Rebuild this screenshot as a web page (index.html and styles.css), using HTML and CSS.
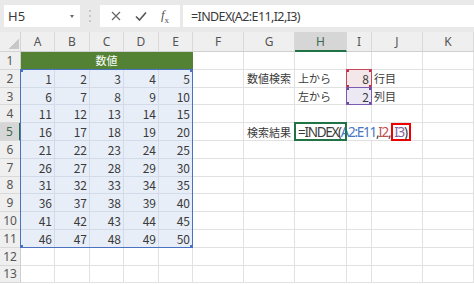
FILE: index.html
```html
<!DOCTYPE html>
<html lang="ja">
<head>
    <meta charset="UTF-8">
    <title>INDEX関数</title>
    <link rel="stylesheet" href="styles.css">
</head>
<body>
    <div class="toolbar">
        <div class="namebox"><span>H5</span><span class="caret"></span></div>
        <div class="grip">
            <svg width="4" height="14" viewBox="0 0 4 14"><circle cx="2" cy="2" r="1" fill="#bbb"/><circle cx="2" cy="7" r="1" fill="#bbb"/><circle cx="2" cy="12" r="1" fill="#bbb"/></svg>
        </div>
        <div class="fxbox">
            <svg class="tb-icon" width="10" height="10" viewBox="0 0 10 10"><path d="M1 1L9 9M9 1L1 9" stroke="#666" stroke-width="1.2" fill="none"/></svg>
            <svg class="tb-icon" width="12" height="10" viewBox="0 0 12 10"><path d="M1 5.5L4.5 9L11 1.5" stroke="#555" stroke-width="1.6" fill="none"/></svg>
            <span class="fx"><i>f</i><sub>x</sub></span>
        </div>
        <div class="formula-input">=INDEX(A2:E11,I2,I3)</div>
    </div>

    <div class="sheet">
        <div class="grid cells">
            <div class="corner"></div>
            <div class="ch">A</div><div class="ch">B</div><div class="ch">C</div><div class="ch">D</div><div class="ch">E</div>
            <div class="ch">F</div><div class="ch">G</div><div class="ch active-col">H</div><div class="ch">I</div><div class="ch">J</div><div class="ch">K</div>

            <div class="rh">1</div>
            <div class="c title">数値</div>
            <div class="c"></div><div class="c"></div><div class="c"></div><div class="c"></div><div class="c"></div><div class="c"></div>

            <div class="rh">2</div>
            <div class="c d">1</div><div class="c d">2</div><div class="c d">3</div><div class="c d">4</div><div class="c d">5</div>
            <div class="c"></div><div class="c jp">数値検索</div><div class="c jp">上から</div><div class="c n ref-row">8</div><div class="c jp tight">行目</div><div class="c"></div>

            <div class="rh">3</div>
            <div class="c d">6</div><div class="c d">7</div><div class="c d">8</div><div class="c d">9</div><div class="c d">10</div>
            <div class="c"></div><div class="c"></div><div class="c jp">左から</div><div class="c n ref-col">2</div><div class="c jp tight">列目</div><div class="c"></div>

            <div class="rh">4</div>
            <div class="c d">11</div><div class="c d">12</div><div class="c d">13</div><div class="c d">14</div><div class="c d">15</div>
            <div class="c"></div><div class="c"></div><div class="c"></div><div class="c"></div><div class="c"></div><div class="c"></div>

            <div class="rh active-row">5</div>
            <div class="c d">16</div><div class="c d">17</div><div class="c d">18</div><div class="c d">19</div><div class="c d">20</div>
            <div class="c"></div><div class="c jp">検索結果</div>
            <div class="c formula">=INDEX(<span class="f-range">A2:E11</span>,<span class="f-row">I2</span>,<span class="mark"><span class="f-col">I3</span>)</span></div>
            <div class="c"></div>

            <div class="rh">6</div>
            <div class="c d">21</div><div class="c d">22</div><div class="c d">23</div><div class="c d">24</div><div class="c d">25</div>
            <div class="c"></div><div class="c"></div><div class="c"></div><div class="c"></div><div class="c"></div><div class="c"></div>

            <div class="rh">7</div>
            <div class="c d">26</div><div class="c d">27</div><div class="c d">28</div><div class="c d">29</div><div class="c d">30</div>
            <div class="c"></div><div class="c"></div><div class="c"></div><div class="c"></div><div class="c"></div><div class="c"></div>

            <div class="rh">8</div>
            <div class="c d">31</div><div class="c d">32</div><div class="c d">33</div><div class="c d">34</div><div class="c d">35</div>
            <div class="c"></div><div class="c"></div><div class="c"></div><div class="c"></div><div class="c"></div><div class="c"></div>

            <div class="rh">9</div>
            <div class="c d">36</div><div class="c d">37</div><div class="c d">38</div><div class="c d">39</div><div class="c d">40</div>
            <div class="c"></div><div class="c"></div><div class="c"></div><div class="c"></div><div class="c"></div><div class="c"></div>

            <div class="rh">10</div>
            <div class="c d">41</div><div class="c d">42</div><div class="c d">43</div><div class="c d">44</div><div class="c d">45</div>
            <div class="c"></div><div class="c"></div><div class="c"></div><div class="c"></div><div class="c"></div><div class="c"></div>

            <div class="rh">11</div>
            <div class="c d">46</div><div class="c d">47</div><div class="c d">48</div><div class="c d">49</div><div class="c d">50</div>
            <div class="c"></div><div class="c"></div><div class="c"></div><div class="c"></div><div class="c"></div><div class="c"></div>

            <div class="rh">12</div>
            <div class="c"></div><div class="c"></div><div class="c"></div><div class="c"></div><div class="c"></div>
            <div class="c"></div><div class="c"></div><div class="c"></div><div class="c"></div><div class="c"></div><div class="c"></div>

            <div class="rh">13</div>
            <div class="c"></div><div class="c"></div><div class="c"></div><div class="c"></div><div class="c"></div>
            <div class="c"></div><div class="c"></div><div class="c"></div><div class="c"></div><div class="c"></div><div class="c"></div>
        </div>

        <!-- range highlights drawn over the cells -->
        <div class="grid overlays">
            <div class="hl hl-data"></div>
            <div class="hl hl-row"></div>
            <div class="hl hl-col"></div>
            <div class="hl hl-active"></div>
        </div>
    </div>
</body>
</html>
```

FILE: styles.css
```css
body {
    margin: 0;
    width: 474px;
    height: 284px;
    overflow: hidden;
    background: #fff;
    color: #3a3a3a;
    font-family: "Noto Sans CJK JP", "Noto Sans", sans-serif;
}

/* formula bar */

.toolbar {
    height: 32px;
    background: #e9e9e9;
    display: flex;
    align-items: center;
    padding-left: 4px;
    box-sizing: border-box;
}

.namebox {
    width: 76px;
    height: 22px;
    background: #fff;
    display: flex;
    align-items: center;
    justify-content: space-between;
    padding: 0 6px 0 4px;
    box-sizing: border-box;
    font-family: "Noto Sans", sans-serif;
    font-size: 13px;
}

.caret {
    border-left: 2.5px solid transparent;
    border-right: 2.5px solid transparent;
    border-top: 3px solid #666;
}

.grip {
    width: 20px;
    display: flex;
    justify-content: center;
}

.fxbox {
    width: 80px;
    height: 22px;
    background: #fff;
    display: flex;
    align-items: center;
    justify-content: space-around;
    padding: 0 4px;
    box-sizing: border-box;
}

.fx {
    font-family: "Liberation Serif", serif;
    font-size: 13px;
    color: #555;
}

.fx sub {
    font-size: 9px;
}

.formula-input {
    flex: 1;
    height: 22px;
    margin-left: 3px;
    background: #fff;
    display: flex;
    align-items: center;
    padding-left: 8px;
    font-family: "Noto Sans", sans-serif;
    font-size: 12.5px;
    letter-spacing: -0.6px;
}

/* sheet */

.sheet {
    display: grid;
}

.grid {
    grid-area: 1 / 1;
    display: grid;
    grid-template-columns: 21px 34px 35px 34px 35px 34px 51px 51px 52px 25px 51px 1fr;
    grid-template-rows: 20px repeat(13, 17.8px);
}

.overlays {
    pointer-events: none;
    z-index: 2;
}

.corner {
    background: #efefef linear-gradient(135deg, transparent 55%, #c8c8c8 55%) no-repeat 7px 5px / 12px 12px;
    border-right: 1px solid #d4d4d4;
    border-bottom: 1px solid #d4d4d4;
}

.ch, .rh {
    background: #efefef;
    color: #555;
    font-family: "Noto Sans", sans-serif;
    font-size: 12px;
    display: flex;
    align-items: center;
    justify-content: center;
    box-sizing: border-box;
    border-right: 1px solid #d9d9d9;
    border-bottom: 1px solid #d9d9d9;
}

.ch {
    border-bottom-color: #cfcfcf;
}

.rh {
    border-right-color: #cfcfcf;
}

.active-col {
    background: #d6d6d6;
    color: #3f6b4f;
    border-bottom: 2px solid #217346;
}

.active-row {
    background: #d6d6d6;
    color: #3f6b4f;
    border-right: 2px solid #217346;
}

.c {
    border-right: 1px solid #e1e1e1;
    border-bottom: 1px solid #e1e1e1;
    box-sizing: border-box;
    font-size: 12px;
    display: flex;
    align-items: center;
    padding: 0 3px;
    white-space: nowrap;
}

.n, .d {
    justify-content: flex-end;
    padding-right: 2px;
}

.d {
    background: #e8eef8;
    border-color: #d3dbe8;
}

.jp {
    font-size: 11px;
}

.tight {
    padding-left: 2px;
}

.title {
    grid-column: span 5;
    background: #548235;
    color: #fff;
    justify-content: center;
    font-size: 11px;
    border-right-color: #548235;
}

.ref-row {
    background: #f4e7e9;
}

.ref-col {
    background: #ede9f4;
}

.formula {
    grid-column: span 3;
    font-family: "Noto Sans", sans-serif;
    font-size: 13.5px;
    letter-spacing: -1.3px;
    padding-left: 3px;
    overflow: visible;
}

.f-range { color: #4a77c4; }
.f-row { color: #c0504d; }
.f-col { color: #8064a2; }

.mark {
    border: 2px solid #ee0000;
    padding: 1px 2px 0 1px;
    margin-left: 1px;
    line-height: 13px;
}

/* highlight frames */

.hl {
    margin: -1px 0 0 -1px;
    background-origin: border-box;
    background-repeat: no-repeat;
    background-size: 3px 3px;
    background-position: left top, right top, left bottom, right bottom;
}

.hl-data {
    grid-column: 2 / 7;
    grid-row: 3 / 13;
    border: 1px solid #4a72c0;
    background-image: linear-gradient(#4a72c0, #4a72c0), linear-gradient(#4a72c0, #4a72c0), linear-gradient(#4a72c0, #4a72c0), linear-gradient(#4a72c0, #4a72c0);
}

.hl-row {
    grid-column: 10 / 11;
    grid-row: 3 / 4;
    border: 1px solid #c8475c;
    background-image: linear-gradient(#b8324c, #b8324c), linear-gradient(#b8324c, #b8324c), linear-gradient(#b8324c, #b8324c), linear-gradient(#b8324c, #b8324c);
}

.hl-col {
    grid-column: 10 / 11;
    grid-row: 4 / 5;
    border: 1px solid #7b5cb0;
    background-image: linear-gradient(#6a4aa0, #6a4aa0), linear-gradient(#6a4aa0, #6a4aa0), linear-gradient(#6a4aa0, #6a4aa0), linear-gradient(#6a4aa0, #6a4aa0);
}

.hl-active {
    grid-column: 9 / 10;
    grid-row: 6 / 7;
    border: 2px solid #217346;
}
```
